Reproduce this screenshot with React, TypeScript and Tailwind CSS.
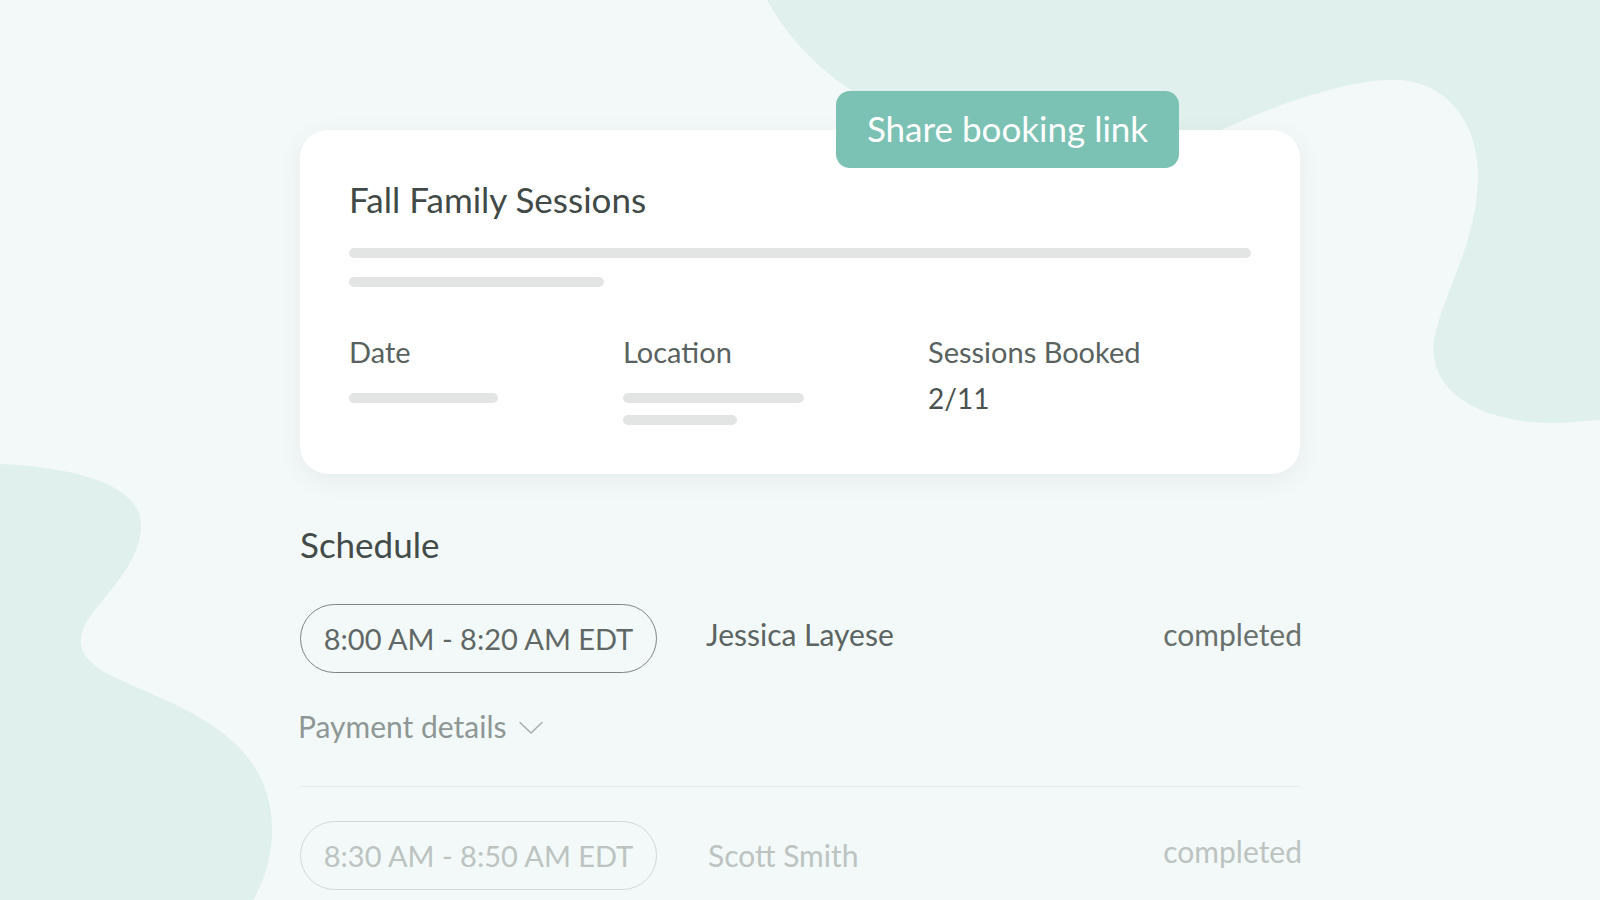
import React from "react";

const font = { fontFamily: "Lato, 'Open Sans', sans-serif" };

function Bar({ w }: { w: string }) {
  return <div className={`h-[10px] rounded-full bg-[#e3e5e5] ${w}`} />;
}

function Row({
  time,
  name,
  faded,
}: {
  time: string;
  name: string;
  faded?: boolean;
}) {
  return (
    <div className="flex items-center">
      <div
        className={
          faded
            ? "flex h-[69px] w-[357px] items-center justify-center rounded-full border border-[#d2d8d7] text-[29px] text-[#bcc3c1]"
            : "flex h-[69px] w-[357px] items-center justify-center rounded-full border border-[#7d8583] text-[29px] text-[#5f6866]"
        }
      >
        {time}
      </div>
      <div
        className={
          faded
            ? "ml-[51px] text-[30px] text-[#bcc3c1]"
            : "ml-[49px] pb-[8px] text-[30px] text-[#5b6462]"
        }
      >
        {name}
      </div>
      <div
        className={
          faded
            ? "-mr-[2px] ml-auto pb-[8px] text-[30px] text-[#bcc3c1]"
            : "-mr-[2px] ml-auto pb-[8px] text-[30px] text-[#69716f]"
        }
      >
        completed
      </div>
    </div>
  );
}

export default function App() {
  return (
    <div
      className="relative h-[900px] w-[1600px] overflow-hidden bg-[#f3f9f8]"
      style={font}
    >
      <svg
        className="absolute inset-0"
        width="1600"
        height="900"
        viewBox="0 0 1600 900"
      >
        <path
          d="M 767 0 C 800 60, 860 110, 960 140 C 1060 170, 1150 160, 1223 129 C 1300 95, 1360 78, 1400 80 C 1460 85, 1480 140, 1478 180 C 1476 240, 1450 280, 1436 330 C 1420 390, 1480 425, 1560 423 L 1600 420 L 1600 0 Z"
          fill="#e0f0ec"
        />
        <path
          d="M 0 464 C 90 468, 141 490, 141 525 C 141 560, 110 590, 95 610 C 70 640, 80 660, 110 675 C 170 705, 272 730, 272 830 C 272 860, 262 885, 253 900 L 0 900 Z"
          fill="#e0f0ec"
        />
      </svg>

      <div className="relative ml-[300px] w-[1000px] pt-[130px]">
        <div className="relative h-[344px] rounded-[28px] bg-white px-[49px] pt-[49px] shadow-[0_6px_24px_rgba(40,70,65,0.07)]">
          <div className="absolute right-[121px] top-[-39px] flex h-[77px] w-[343px] items-center justify-center rounded-[14px] bg-[#7bc1b4] pb-[2px] text-[35px] text-white">
            Share booking link
          </div>
          <div className="text-[35px] leading-[40px] text-[#424a48]">
            Fall Family Sessions
          </div>
          <div className="mt-[29px]">
            <Bar w="w-full" />
          </div>
          <div className="mt-[19px]">
            <Bar w="w-[255px]" />
          </div>
          <div className="mt-[49px] grid grid-cols-[274px_305px_1fr]">
            <div>
              <div className="text-[29px] leading-[32px] text-[#59625f]">
                Date
              </div>
              <div className="mt-[25px]">
                <Bar w="w-[149px]" />
              </div>
            </div>
            <div>
              <div className="text-[29px] leading-[32px] text-[#59625f]">
                Location
              </div>
              <div className="mt-[25px]">
                <Bar w="w-[181px]" />
              </div>
              <div className="mt-[12px]">
                <Bar w="w-[114px]" />
              </div>
            </div>
            <div>
              <div className="text-[29px] leading-[32px] text-[#59625f]">
                Sessions Booked
              </div>
              <div className="mt-[14px] text-[28px] leading-[32px] text-[#4a5250]">
                2/11
              </div>
            </div>
          </div>
        </div>

        <div className="mt-[50px] text-[35px] leading-[40px] text-[#434b49]">
          Schedule
        </div>
        <div className="mt-[40px]">
          <Row time="8:00 AM - 8:20 AM EDT" name="Jessica Layese" />
        </div>
        <div className="mt-[37px] flex items-center text-[30px] leading-[32px] text-[#8e9795]">
          <span className="-ml-[2px]">Payment details</span>
          <svg
            className="ml-[12px] mt-[4px]"
            width="24"
            height="14"
            viewBox="0 0 24 14"
            fill="none"
          >
            <path
              d="M1 1.5 L12 12 L23 1.5"
              stroke="#a3acaa"
              strokeWidth="1.4"
              strokeLinecap="round"
              strokeLinejoin="round"
            />
          </svg>
        </div>
        <div className="mt-[44px] h-px bg-[#e5ecea]" />
        <div className="mt-[34px]">
          <Row time="8:30 AM - 8:50 AM EDT" name="Scott Smith" faded />
        </div>
      </div>
    </div>
  );
}
